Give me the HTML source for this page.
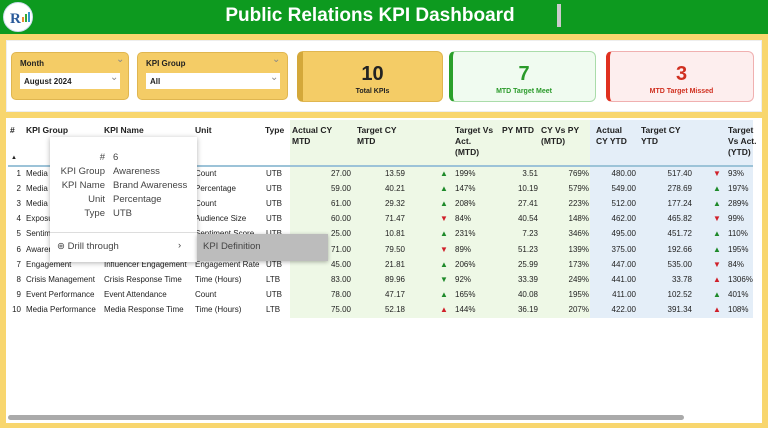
<!DOCTYPE html>
<html><head><meta charset="utf-8"><style>
*{margin:0;padding:0;box-sizing:border-box}
body{width:768px;height:428px;background:#f8d66e;font-family:"Liberation Sans",sans-serif;position:relative;overflow:hidden;font-size:8px;color:#222}
.hdr{position:absolute;left:0;top:0;width:768px;height:34px;background:#0d9a1f}
.title{position:absolute;left:0;width:740px;top:5px;text-align:center;color:#fff;font-weight:bold;font-size:19px}
.logo{position:absolute;left:3px;top:2px;width:30px;height:30px;border-radius:50%;background:#fff;border:1px solid #cde}
.bar{position:absolute;left:557px;top:4px;width:4px;height:23px;background:#ccc}
.top{position:absolute;left:6px;top:40px;width:756px;height:72px;background:#fff;border:1px solid #eee}
.sl{position:absolute;top:52px;height:48px;background:#f4cc66;border:1px solid #e0b650;border-radius:5px}
.sl b{position:absolute;left:8px;top:6px;font-size:8px}
.sl .dd{position:absolute;left:8px;top:20px;height:16px;background:#fff;font-weight:bold;font-size:8px;padding:4px 4px}
.chev{position:absolute;font-size:10px;color:#888}
.card{position:absolute;top:51px;height:51px;border-radius:6px;text-align:center}
.card .n{font-size:20px;font-weight:bold;margin-top:11px}
.card .l{font-size:7px;font-weight:bold;margin-top:2px}
.tbl{position:absolute;left:6px;top:118px;width:756px;height:305px;background:#fff}
.gbg{position:absolute;left:290px;top:120px;width:300px;height:198px;background:#eef8e6}
.bbg{position:absolute;left:590px;top:120px;width:163px;height:198px;background:#e4eef8}
.hline{position:absolute;left:8px;top:165px;width:745px;height:2px;background:#9cc3d8}
.h{position:absolute;top:125px;font-weight:bold;font-size:8.5px;line-height:11px}
.r{position:absolute;font-size:8px;white-space:nowrap}
.ra{text-align:right}
.up{color:#1e8a2a}.dn{color:#d0202a}.rup{color:#d0202a}
.tip{position:absolute;left:50px;top:137px;width:147px;height:125px;background:#fff;box-shadow:0 1px 5px rgba(0,0,0,.3);font-size:9.5px;color:#444}
.tip .k{position:absolute;width:55px;text-align:right;left:0}
.tip .v{position:absolute;left:63px}
.sub{position:absolute;left:197px;top:234px;width:131px;height:27px;background:#bcbcbc;box-shadow:0 1px 4px rgba(0,0,0,.3);font-size:9.5px;color:#444;padding:7px 6px}
.sb{position:absolute;left:8px;top:415px;width:676px;height:5px;background:#aaa;border-radius:3px}
</style></head><body>
<div class="hdr"></div>
<div class="logo"><svg width="30" height="30"><text x="6" y="20" font-size="15" font-weight="bold" fill="#2a5a9a" font-family="Liberation Serif">R</text><rect x="18" y="14" width="2" height="5" fill="#e83"/><rect x="21" y="11" width="2" height="8" fill="#3a3"/><rect x="24" y="9" width="2" height="10" fill="#39c"/></svg></div>
<div class="title">Public Relations KPI Dashboard</div>
<div class="bar"></div>
<div class="top"></div>
<div class="sl" style="left:11px;width:118px"><b>Month</b><span class="chev" style="left:104px;top:1px">⌄</span><div class="dd" style="width:100px">August 2024</div><span class="chev" style="left:98px;top:19px">⌄</span></div>
<div class="sl" style="left:137px;width:151px"><b>KPI Group</b><span class="chev" style="left:134px;top:1px">⌄</span><div class="dd" style="width:134px">All</div><span class="chev" style="left:132px;top:19px">⌄</span></div>
<div class="card" style="left:297px;width:146px;background:#f4cc66;border:1px solid #e0b650;border-left:6px solid #d4a83a"><div class="n">10</div><div class="l">Total KPIs</div></div>
<div class="card" style="left:449px;width:147px;background:#f0fbf0;border:1px solid #aadcaa;border-left:4px solid #2aa02a"><div class="n" style="color:#2a9a2a">7</div><div class="l" style="color:#2a9a2a">MTD Target Meet</div></div>
<div class="card" style="left:606px;width:148px;background:#fdeeee;border:1px solid #f0b0b0;border-left:4px solid #e03020"><div class="n" style="color:#d03020">3</div><div class="l" style="color:#d03020">MTD Target Missed</div></div>
<div class="tbl"></div>
<div class="gbg"></div><div class="bbg"></div>
<div class="h" style="left:10px">#</div>
<div class="h" style="left:26px">KPI Group</div>
<div class="h" style="left:104px">KPI Name</div>
<div class="h" style="left:195px">Unit</div>
<div class="h" style="left:265px">Type</div>
<div class="h" style="left:292px">Actual CY<br>MTD</div>
<div class="h" style="left:357px">Target CY<br>MTD</div>
<div class="h" style="left:455px">Target Vs<br>Act.<br>(MTD)</div>
<div class="h" style="left:502px">PY MTD</div>
<div class="h" style="left:541px">CY Vs PY<br>(MTD)</div>
<div class="h" style="left:596px">Actual<br>CY YTD</div>
<div class="h" style="left:641px">Target CY<br>YTD</div>
<div class="h" style="left:728px">Target<br>Vs Act.<br>(YTD)</div>
<div class="r" style="left:11px;top:155px;font-size:6px">▲</div>
<div class="hline"></div>
<div id="rows"></div>
<script>
var d=[
[1,"Media Performance","Media Coverage","Count","UTB","27.00","13.59","u","199%","3.51","769%","480.00","517.40","d","93%"],
[2,"Media Performance","Share of Voice","Percentage","UTB","59.00","40.21","u","147%","10.19","579%","549.00","278.69","u","197%"],
[3,"Media Performance","Media Mentions","Count","UTB","61.00","29.32","u","208%","27.41","223%","512.00","177.24","u","289%"],
[4,"Exposure","Reach","Audience Size","UTB","60.00","71.47","d","84%","40.54","148%","462.00","465.82","d","99%"],
[5,"Sentiment","Sentiment Score","Sentiment Score","UTB","25.00","10.81","u","231%","7.23","346%","495.00","451.72","u","110%"],
[6,"Awareness","Brand Awareness","Percentage","UTB","71.00","79.50","d","89%","51.23","139%","375.00","192.66","u","195%"],
[7,"Engagement","Influencer Engagement","Engagement Rate","UTB","45.00","21.81","u","206%","25.99","173%","447.00","535.00","d","84%"],
[8,"Crisis Management","Crisis Response Time","Time (Hours)","LTB","83.00","89.96","g","92%","33.39","249%","441.00","33.78","r","1306%"],
[9,"Event Performance","Event Attendance","Count","UTB","78.00","47.17","u","165%","40.08","195%","411.00","102.52","u","401%"],
[10,"Media Performance","Media Response Time","Time (Hours)","LTB","75.00","52.18","r","144%","36.19","207%","422.00","391.34","r","108%"]];
function ar(t){return t=="u"?'<span class="up">▲</span>':t=="d"?'<span class="dn">▼</span>':t=="g"?'<span class="up">▼</span>':'<span class="rup">▲</span>'}
var h="";d.forEach(function(r,i){var y=169+i*15.1;
function c(x,s,w){return '<div class="r'+(w?' ra':'')+'" style="'+(w?'left:'+(x-w)+'px;width:'+w+'px':'left:'+x+'px')+';top:'+y+'px">'+s+'</div>'}
h+=c(21,r[0],14)+c(26,r[1])+c(104,r[2])+c(195,r[3])+c(266,r[4])+c(351,r[5],50)+c(405,r[6],50)+c(440,ar(r[7]))+c(455,r[8])+c(538,r[9],50)+c(589,r[10],45)+c(636,r[11],45)+c(692,r[12],50)+c(713,ar(r[13]))+c(728,r[14]);});
document.getElementById("rows").innerHTML=h;
</script>
<div class="tip">
<div class="k" style="top:15px">#</div><div class="v" style="top:15px">6</div>
<div class="k" style="top:29px">KPI Group</div><div class="v" style="top:29px">Awareness</div>
<div class="k" style="top:43px">KPI Name</div><div class="v" style="top:43px">Brand Awareness</div>
<div class="k" style="top:57px">Unit</div><div class="v" style="top:57px">Percentage</div>
<div class="k" style="top:71px">Type</div><div class="v" style="top:71px">UTB</div>
<div style="position:absolute;left:0;top:95px;width:147px;height:1px;background:#ddd"></div>
<div style="position:absolute;left:7px;top:104px">⊛ Drill through</div>
<div style="position:absolute;left:128px;top:103px">›</div>
</div>
<div class="sub">KPI Definition</div>
<div class="sb"></div>
</body></html>
